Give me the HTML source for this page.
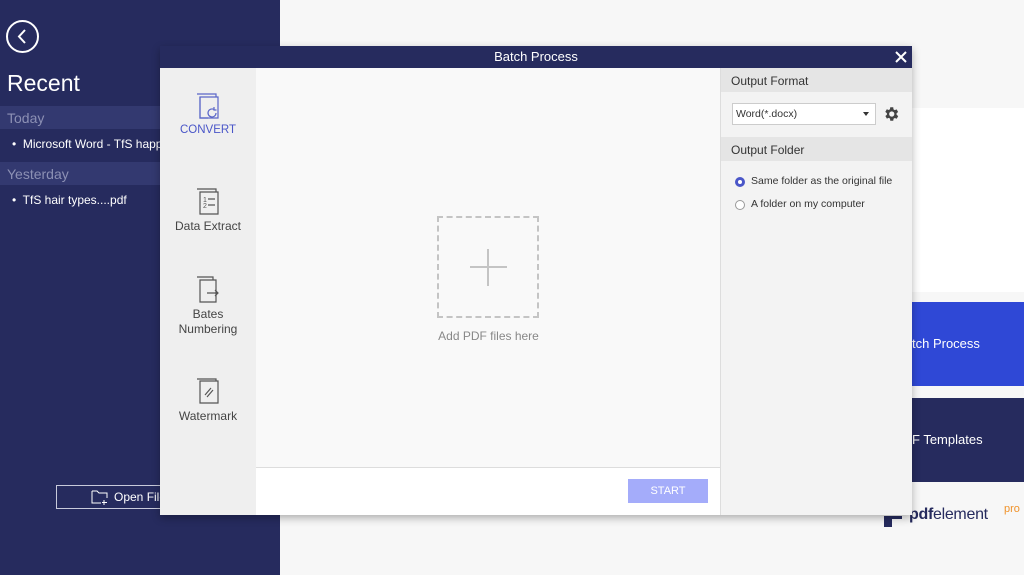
<!DOCTYPE html>
<html><head><style>
*{margin:0;padding:0;box-sizing:border-box}
body{width:1024px;height:575px;overflow:hidden;background:#f7f7f7;font-family:"Liberation Sans",sans-serif;position:relative}
.a{position:absolute}
</style></head><body>
<div class="a" style="left:0;top:0;width:280px;height:575px;background:#262b5e"></div>
<div class="a" style="left:6px;top:20px;width:33px;height:33px;border:2px solid #fff;border-radius:50%"></div>
<svg class="a" style="left:6px;top:20px" width="33" height="33"><path d="M19 10 L13 16.5 L19 23" stroke="#fff" stroke-width="2" fill="none"/></svg>
<div class="a" style="left:7px;top:70px;color:#fff;font-size:23px">Recent</div>
<div class="a" style="left:0;top:106px;width:280px;height:23px;background:#333970"></div>
<div class="a" style="left:7px;top:110px;color:#8c90b4;font-size:14px">Today</div>
<div class="a" style="left:12px;top:137px;color:#fff;font-size:12px">•&nbsp; Microsoft Word - TfS happ</div>
<div class="a" style="left:0;top:162px;width:280px;height:23px;background:#333970"></div>
<div class="a" style="left:7px;top:166px;color:#8c90b4;font-size:14px">Yesterday</div>
<div class="a" style="left:12px;top:193px;color:#fff;font-size:12px">•&nbsp; TfS hair types....pdf</div>
<div class="a" style="left:56px;top:485px;width:130px;height:24px;border:1px solid #c8cadb"></div>
<svg class="a" style="left:91px;top:489px" width="18" height="16"><path d="M1 2h5l2 2h8v5M1 2v12h9M13 11v5M11 13.5h5" stroke="#fff" fill="none"/></svg>
<div class="a" style="left:114px;top:490px;color:#fff;font-size:12px">Open File</div>

<div class="a" style="left:912px;top:108px;width:112px;height:184px;background:#fff"></div>
<div class="a" style="left:912px;top:302px;width:112px;height:84px;background:#2f48d6"></div>
<div class="a" style="left:912px;top:336px;color:#fff;font-size:13px">tch Process</div>
<div class="a" style="left:912px;top:398px;width:112px;height:84px;background:#262b5e"></div>
<div class="a" style="left:912px;top:432px;color:#fff;font-size:13px">F Templates</div>
<div class="a" style="left:884px;top:516px;width:18px;height:3px;background:#262b5e"></div>
<div class="a" style="left:884px;top:519px;width:8px;height:8px;background:#262b5e"></div>
<div class="a" style="left:909px;top:506px;color:#262b5e;font-size:16px;letter-spacing:-0.3px"><b>pdf</b>element</div>
<div class="a" style="left:1004px;top:503px;color:#f0932b;font-size:11px">pro</div>

<div class="a" style="left:160px;top:46px;width:752px;height:469px;box-shadow:0 3px 8px rgba(0,0,0,.3)"></div>
<div class="a" style="left:160px;top:46px;width:752px;height:22px;background:#262b5e;color:#fff;font-size:13px;text-align:center;line-height:22px">Batch Process</div>
<svg class="a" style="left:895px;top:51px" width="12" height="12"><path d="M1 1L11 11M11 1L1 11" stroke="#fff" stroke-width="2"/></svg>
<div class="a" style="left:160px;top:68px;width:96px;height:447px;background:#efefef"></div>
<div class="a" style="left:256px;top:68px;width:465px;height:400px;background:#f9f9f9"></div>
<div class="a" style="left:256px;top:467px;width:465px;height:48px;background:#fff;border-top:1px solid #ddd"></div>
<div class="a" style="left:628px;top:479px;width:80px;height:24px;background:#a4acfa;color:#fff;font-size:11px;text-align:center;line-height:24px">START</div>
<div class="a" style="left:720px;top:68px;width:192px;height:447px;background:#f3f3f3;border-left:1px solid #ddd"></div>

<svg class="a" style="left:196px;top:93px" width="26" height="30" fill="none" stroke="#5a66c8" stroke-width="1.2"><path d="M1 1h19v3M4 4h18v21H4z"/><path d="M4 4v21h8" /><path d="M20 20a4 4 0 1 1-2-3.5M18 14v3h2.5" fill="#efefef"/></svg>
<div class="a" style="left:160px;top:124px;width:96px;text-align:center;color:#4a56c8;font-size:11.5px">CONVERT</div>
<svg class="a" style="left:196px;top:188px" width="26" height="30" fill="none" stroke="#555" stroke-width="1.2"><path d="M1 1h19v3M4 4h18v22H4z"/><path d="M12 11h7M12 17h7"/><text x="7" y="14" font-size="7" fill="#555" stroke="none">1</text><text x="7" y="20" font-size="7" fill="#555" stroke="none">2</text></svg>
<div class="a" style="left:160px;top:219px;width:96px;text-align:center;color:#444;font-size:12px">Data Extract</div>
<svg class="a" style="left:196px;top:276px" width="26" height="30" fill="none" stroke="#555" stroke-width="1.2"><path d="M1 1h16v3M4 4h16v22H4z"/><path d="M11 17h11M19 14l3 3-3 3"/></svg>
<div class="a" style="left:160px;top:307px;width:96px;text-align:center;color:#444;font-size:12px;line-height:15px">Bates<br>Numbering</div>
<svg class="a" style="left:196px;top:377px" width="26" height="30" fill="none" stroke="#555" stroke-width="1.2"><path d="M1 2h19v2M4 4h18v22H4z"/><path d="M9 18l6-7M11 20l6-7"/></svg>
<div class="a" style="left:160px;top:409px;width:96px;text-align:center;color:#444;font-size:12px">Watermark</div>

<div class="a" style="left:437px;top:216px;width:102px;height:102px;border:2px dashed #c4c4c4"></div>
<div class="a" style="left:470px;top:266px;width:37px;height:2px;background:#c4c4c4"></div>
<div class="a" style="left:487px;top:249px;width:2px;height:37px;background:#c4c4c4"></div>
<div class="a" style="left:256px;top:329px;width:465px;text-align:center;color:#888;font-size:12px">Add PDF files here</div>

<div class="a" style="left:721px;top:68px;width:191px;height:24px;background:#e5e5e5;color:#333;font-size:12px;padding:6px 10px">Output Format</div>
<div class="a" style="left:732px;top:103px;width:144px;height:22px;background:#fff;border:1px solid #ccc;color:#333;font-size:10.5px;padding:4px 3px">Word(*.docx)</div>
<div class="a" style="left:863px;top:112px;border:3px solid transparent;border-top:4px solid #333"></div>
<svg class="a" style="left:882px;top:105px" width="18" height="18" viewBox="0 0 24 24"><path fill="#444" d="M19.4 13a7.5 7.5 0 0 0 0-2l2.1-1.6-2-3.5-2.5 1a7 7 0 0 0-1.7-1L15 3h-4l-.4 2.7a7 7 0 0 0-1.7 1l-2.5-1-2 3.5L6.6 11a7.5 7.5 0 0 0 0 2l-2.1 1.6 2 3.5 2.5-1a7 7 0 0 0 1.7 1L11 21h4l.4-2.7a7 7 0 0 0 1.7-1l2.5 1 2-3.5zM13 15.5a3.5 3.5 0 1 1 0-7 3.5 3.5 0 0 1 0 7z"/></svg>
<div class="a" style="left:721px;top:137px;width:191px;height:24px;background:#e5e5e5;color:#333;font-size:12px;padding:6px 10px">Output Folder</div>
<div class="a" style="left:735px;top:177px;width:10px;height:10px;border:3px solid #4a56c8;border-radius:50%;background:#fff"></div>
<div class="a" style="left:751px;top:175px;color:#333;font-size:10.5px">Same folder as the original file</div>
<div class="a" style="left:735px;top:200px;width:10px;height:10px;border:1px solid #999;border-radius:50%;background:#fff"></div>
<div class="a" style="left:751px;top:198px;color:#333;font-size:10.5px">A folder on my computer</div>
</body></html>
